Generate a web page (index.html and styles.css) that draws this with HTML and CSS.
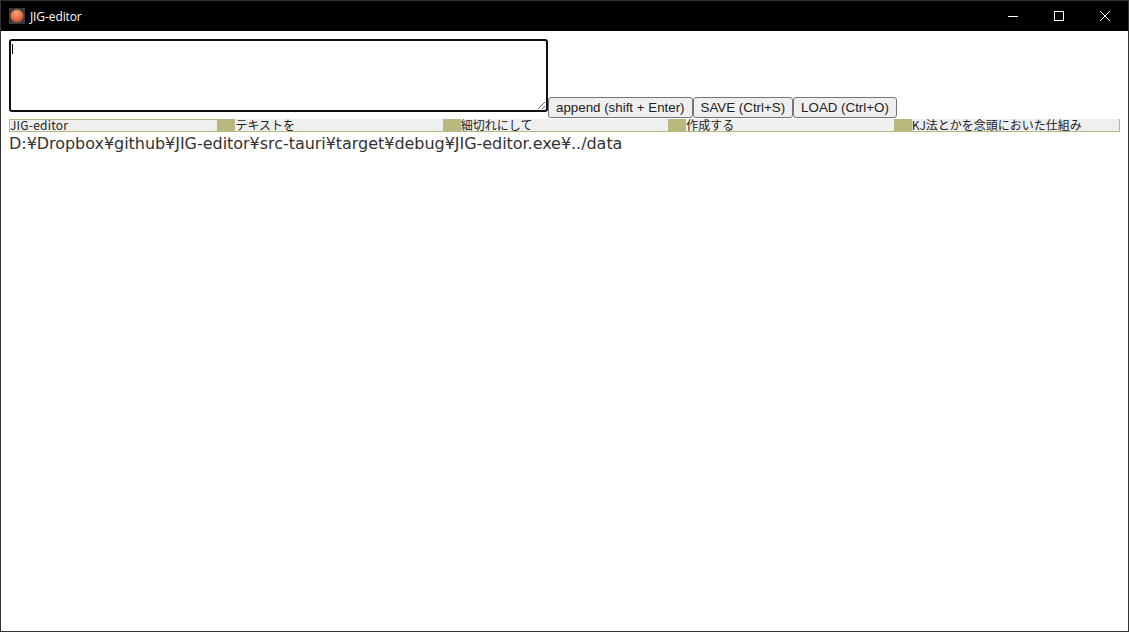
FILE: index.html
```html
<!DOCTYPE html>
<html lang="ja">
<head>
    <meta charset="UTF-8">
    <title>JIG-editor</title>
    <link rel="stylesheet" href="styles.css">
</head>
<body>
    <div class="window">
        <!-- タイトルバー -->
        <div class="titlebar">
            <svg class="app-icon" width="16" height="16" viewBox="0 0 16 16">
                <defs>
                    <radialGradient id="ball" cx="0.45" cy="0.3" r="0.8">
                        <stop offset="0" stop-color="#f7a679"/>
                        <stop offset="0.6" stop-color="#e2673a"/>
                        <stop offset="1" stop-color="#8a4a34"/>
                    </radialGradient>
                </defs>
                <rect width="16" height="16" fill="#3a3a3a"/>
                <circle cx="8" cy="8" r="6.5" fill="url(#ball)"/>
            </svg>
            <span class="app-title">JIG-editor</span>
            <div class="window-buttons">
                <div class="window-button">
                    <svg width="10" height="10" viewBox="0 0 10 10"><path d="M0 5.5H10" stroke="#fff" fill="none"/></svg>
                </div>
                <div class="window-button">
                    <svg width="10" height="10" viewBox="0 0 10 10"><rect x="0.5" y="0.5" width="9" height="9" stroke="#fff" fill="none"/></svg>
                </div>
                <div class="window-button">
                    <svg width="10" height="10" viewBox="0 0 10 10"><path d="M0 0L10 10M10 0L0 10" stroke="#fff" fill="none"/></svg>
                </div>
            </div>
        </div>

        <div class="content">
            <div class="toolbar">
                <div class="editor-wrap">
                    <textarea class="editor"></textarea>
                    <span class="caret"></span>
                </div>
                <button class="btn">append (shift + Enter)</button>
                <button class="btn">SAVE (Ctrl+S)</button>
                <button class="btn">LOAD (Ctrl+O)</button>
            </div>

            <div class="row">
                <div class="cell cell-latin">JIG-editor</div>
                <div class="handle"></div>
                <div class="cell">テキストを</div>
                <div class="handle"></div>
                <div class="cell">細切れにして</div>
                <div class="handle"></div>
                <div class="cell">作成する</div>
                <div class="handle"></div>
                <div class="cell">KJ法とかを念頭においた仕組み</div>
            </div>

            <div class="path">D:¥Dropbox¥github¥JIG-editor¥src-tauri¥target¥debug¥JIG-editor.exe¥../data</div>
        </div>
    </div>
</body>
</html>
```

FILE: styles.css
```css
html, body {
    margin: 0;
    padding: 0;
    height: 100%;
    overflow: hidden;
}

.window {
    box-sizing: border-box;
    height: 100%;
    border: 1px solid #333333;
    background-color: #ffffff;
    display: flex;
    flex-direction: column;
}

.titlebar {
    display: flex;
    align-items: center;
    height: 30px;
    flex-shrink: 0;
    background-color: #000000;
    color: #ffffff;
    font-family: "Open Sans", sans-serif;
    font-size: 12px;
    letter-spacing: -0.1px;
}

.app-icon {
    margin-left: 8px;
    margin-right: 5px;
}

.window-buttons {
    display: flex;
    margin-left: auto;
}

.window-button {
    width: 46px;
    height: 30px;
    display: flex;
    align-items: center;
    justify-content: center;
}

.content {
    padding: 8px 8px 0;
}

.toolbar {
    display: flex;
    align-items: flex-end;
}

.editor-wrap {
    position: relative;
    height: 73px;
    margin-bottom: 6px;
}

.editor {
    display: block;
    box-sizing: border-box;
    width: 539px;
    height: 73px;
    margin: 0;
    padding: 2px;
    border: 2px solid #101010;
    border-radius: 3px;
    outline: none;
}

.caret {
    position: absolute;
    left: 3px;
    top: 5px;
    width: 1px;
    height: 10px;
    background-color: #000000;
}

.btn {
    box-sizing: border-box;
    height: 21px;
    padding: 1px 7px;
    border: 1px solid #767676;
    border-radius: 3px;
    background-color: #efefef;
    color: #222222;
    font-family: "Liberation Sans", Arial, sans-serif;
    font-size: 13.3333px;
}

.row {
    display: flex;
    height: 13px;
    margin-top: 1px;
    width: 1111px;
    box-sizing: border-box;
    border: 1px solid #b8b97f;
    border-top: none;
    background-color: #efefef;
    font-family: "Noto Sans CJK JP", sans-serif;
    font-size: 12px;
    line-height: 12px;
    color: #222222;
}

.cell {
    flex: 1;
    min-width: 0;
    white-space: nowrap;
}

.cell-latin {
    letter-spacing: 0.2px;
    box-shadow: inset 0 1px 0 #b8b97f;
}

.handle {
    width: 18px;
    flex-shrink: 0;
    background-color: #b8b97f;
}

.path {
    font-family: "DejaVu Sans", "Noto Sans CJK JP", sans-serif;
    font-size: 16px;
    line-height: 23px;
    letter-spacing: -0.04px;
    color: #333333;
}
```
